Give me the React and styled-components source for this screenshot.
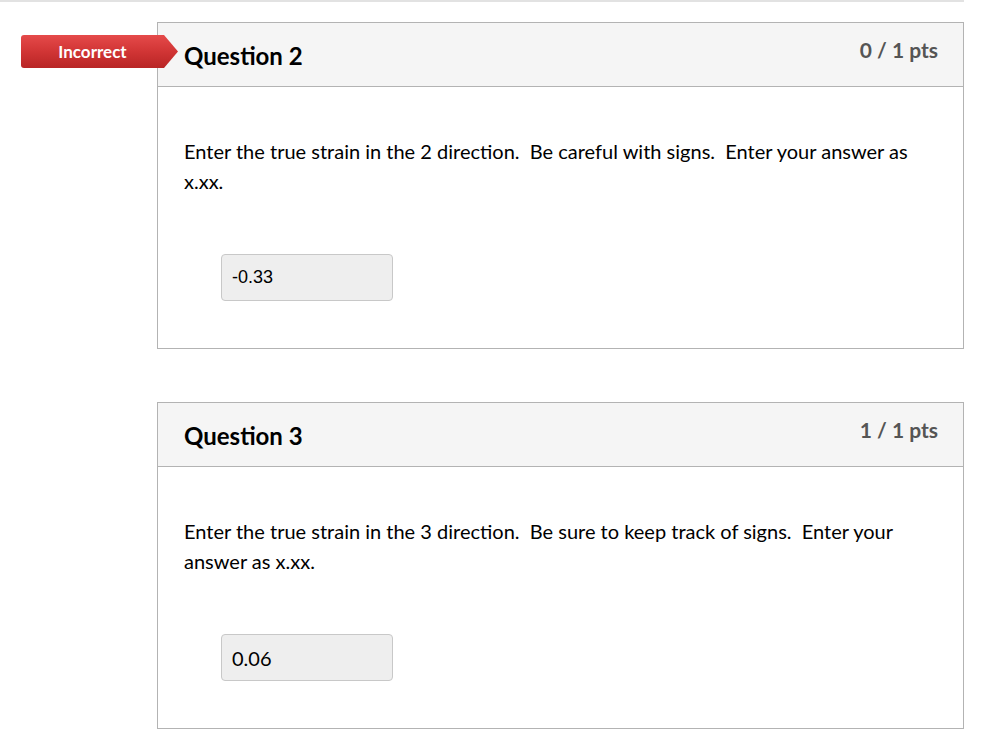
import React from 'react';
import styled, {createGlobalStyle} from 'styled-components';

const GlobalStyle = createGlobalStyle`
  html, body {
    margin: 0;
    padding: 0;
    background: #FFFFFF;
  }
  body {
    font-family: Lato, "Noto Sans", sans-serif;
    color: #000000;
  }
`

const Page = styled.div`
  border-top: 2px solid #E2E2E2;
  padding: 20px 0 20px 157px;
  display: flex;
  flex-direction: column;
  gap: 53px;
  width: 807px;
`

const Card = styled.div`
  position: relative;
  border: 1px solid #B3B3B3;
  background: #FFFFFF;
`

const Header = styled.div`
  display: flex;
  justify-content: space-between;
  align-items: flex-start;
  height: 63px;
  padding: 0 25px 0 26px;
  background: #F5F5F5;
  border-bottom: 1px solid #B3B3B3;
`

const Title = styled.h2`
  margin: 18px 0 0;
  font-size: 24px;
  font-weight: 700;
  line-height: 30px;
  color: #000000;
`

const Points = styled.div`
  margin-top: 13px;
  font-size: 21px;
  font-weight: 700;
  line-height: 28px;
  color: #555555;
`

const Body = styled.div`
  padding: 49px 40px 47px 26px;
`

const Text = styled.p`
  margin: 0 0 58px;
  font-size: 20px;
  line-height: 30px;
  color: #000000;
`

const Answer = styled.div`
  margin-left: 37px;
  width: 160px;
  height: 45px;
  box-sizing: content-box;
  display: flex;
  align-items: center;
  padding-left: 10px;
  background: #EEEEEE;
  border: 1px solid #C8C8C8;
  border-radius: 4px;
  font-family: ${(props) => (props.mono ? '"Liberation Sans", Arial, sans-serif' : 'Lato, sans-serif')};
  font-size: ${(props) => (props.mono ? '18px' : '20px')};
  color: #000000;
`

const Badge = styled.div`
  position: absolute;
  left: -137px;
  top: 12px;
  width: 157px;
  height: 33px;
  padding-right: 14px;
  box-sizing: border-box;
  display: flex;
  align-items: center;
  justify-content: center;
  color: #FFFFFF;
  font-size: 17px;
  font-weight: 700;
  background: linear-gradient(to bottom, #E54A4A 0%, #D13535 50%, #B82525 100%);
  border-radius: 3px 0 0 3px;
  clip-path: polygon(0 0, 143px 0, 100% 50%, 143px 100%, 0 100%);
`

const questions = [
  {
    id: 2,
    pts: '0 / 1 pts',
    incorrect: true,
    text: 'Enter the true strain in the 2 direction.\u00a0 Be careful with signs.\u00a0 Enter your answer as x.xx.',
    answer: '-0.33',
    mono: true,
  },
  {
    id: 3,
    pts: '1 / 1 pts',
    incorrect: false,
    text: 'Enter the true strain in the 3 direction.\u00a0 Be sure to keep track of signs.\u00a0 Enter your answer as x.xx.',
    answer: '0.06',
    mono: false,
  },
]

export default function App() {
  return (
    <>
      <GlobalStyle/>
      <Page>
        {questions.map((q) => (
          <Card key={q.id}>
            {q.incorrect && <Badge>Incorrect</Badge>}
            <Header>
              <Title>Question {q.id}</Title>
              <Points>{q.pts}</Points>
            </Header>
            <Body>
              <Text>{q.text}</Text>
              <Answer mono={q.mono}>{q.answer}</Answer>
            </Body>
          </Card>
        ))}
      </Page>
    </>
  )
}
